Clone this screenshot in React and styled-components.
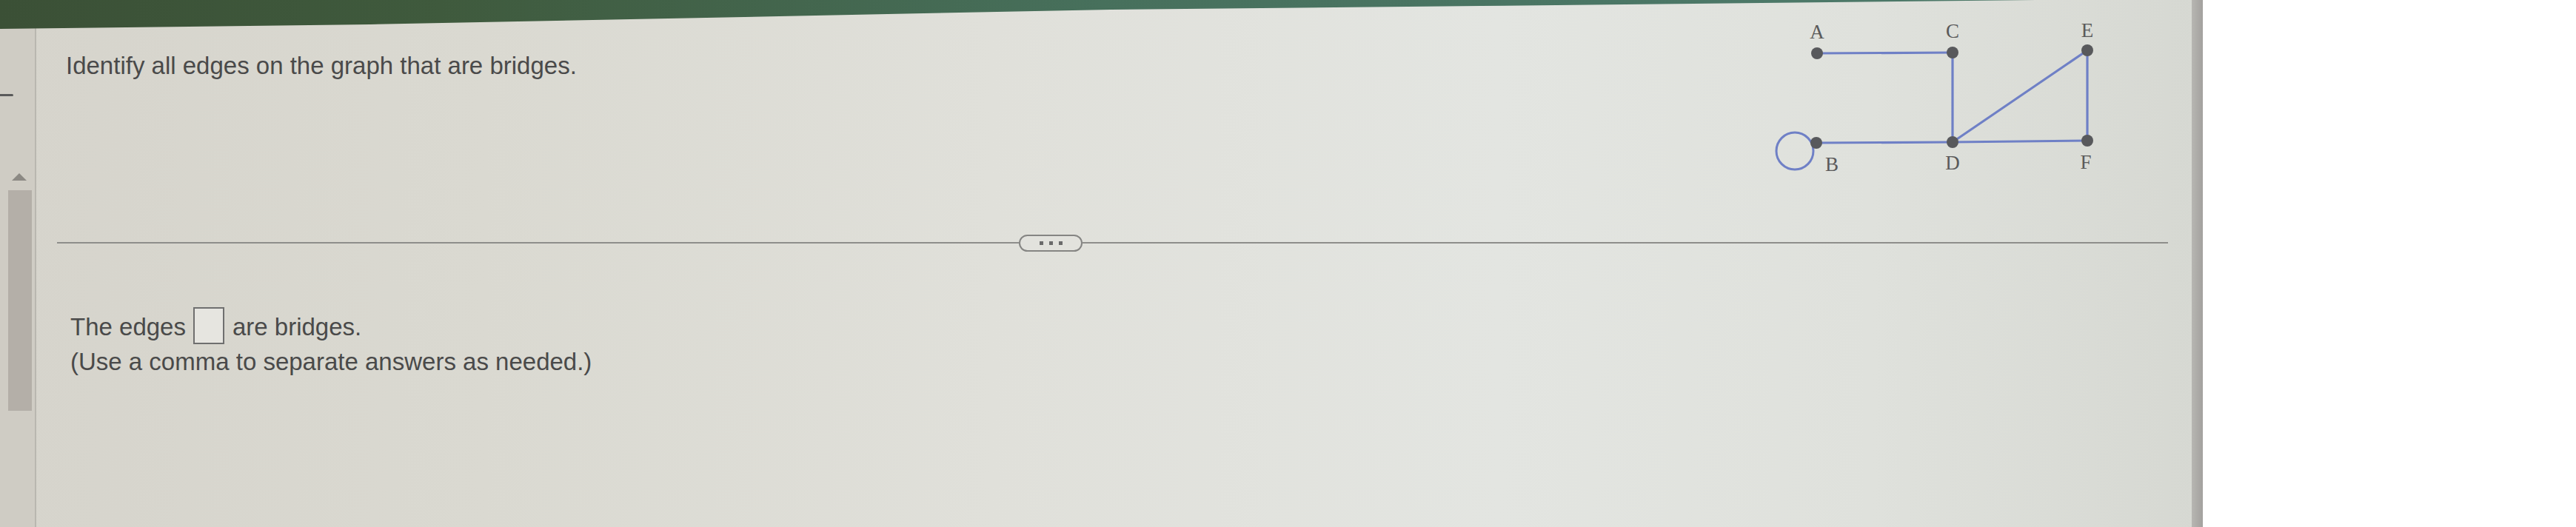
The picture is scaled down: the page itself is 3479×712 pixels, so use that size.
import React from "react";
import styled, { createGlobalStyle } from "styled-components";

const Global = createGlobalStyle`
  html, body { margin: 0; padding: 0; background: #ffffff; }
  body { font-family: "Liberation Sans", Arial, sans-serif; }
`;

const Screen = styled.div`
  width: 3479px;
  height: 712px;
  display: flex;
  background: #ffffff;
  overflow: hidden;
`;

const Panel = styled.div`
  position: relative;
  width: 2975px;
  height: 712px;
  display: flex;
  background: linear-gradient(90deg, #d6d4cc 0%, #dad9d1 22%, #e0e0da 45%, #e3e5e1 68%, #dfe1dc 85%, #d6d8d2 100%);
  &::before {
    content: "";
    position: absolute;
    left: 0;
    top: 0;
    width: 2975px;
    height: 42px;
    background: linear-gradient(90deg, #3b5036 0%, #3f5a3d 20%, #47705c 50%, #4c7868 80%);
    clip-path: polygon(0 0, 2750px 0, 2000px 8px, 1500px 13px, 500px 33px, 0 39px);
    z-index: 2;
  }
`;

const Sidebar = styled.div`
  position: relative;
  width: 47px;
  flex: none;
  background: #cfccc4;
  border-right: 2px solid #b9b7b0;
`;

const Tick = styled.div`
  position: absolute;
  left: 0;
  top: ${p => p.$top}px;
  width: ${p => p.$w}px;
  height: 3px;
  background: #5a5a5a;
  border-radius: 0 2px 2px 0;
`;

const ArrowUp = styled.div`
  position: absolute;
  left: 16px;
  top: 234px;
  width: 0;
  height: 0;
  border-left: 10px solid transparent;
  border-right: 10px solid transparent;
  border-bottom: 10px solid #8c8984;
`;

const Thumb = styled.div`
  position: absolute;
  left: 11px;
  top: 257px;
  width: 32px;
  height: 298px;
  background: #b4afa8;
`;

const EdgeStrip = styled.div`
  width: 15px;
  flex: none;
  background: linear-gradient(90deg, #b7b6b2, #a3a19e);
`;

const Content = styled.div`
  flex: 1;
  display: flex;
  flex-direction: column;
  color: #4a4a4a;
`;

const Header = styled.div`
  height: 316px;
  display: flex;
  justify-content: space-between;
  align-items: flex-start;
`;

const Question = styled.div`
  margin: 69px 0 0 40px;
  font-size: 33px;
  line-height: 1.2;
`;

const GraphSvg = styled.svg`
  display: block;
  margin-right: 96px;
`;

const DividerRow = styled.div`
  height: 24px;
  display: flex;
  align-items: center;
  margin: 0 32px 0 28px;
`;

const Rule = styled.div`
  height: 2px;
  background: #8e8e8b;
  flex: ${p => (p.$grow ? 1 : "none")};
  width: ${p => (p.$w ? `${p.$w}px` : "auto")};
`;

const Pill = styled.div`
  width: 82px;
  height: 19px;
  flex: none;
  border: 2px solid #858583;
  border-radius: 12px;
  display: flex;
  align-items: center;
  justify-content: center;
  gap: 8px;
  background: #e2e2dd;
`;

const Dot = styled.span`
  width: 5px;
  height: 5px;
  background: #6b6b6b;
`;

const Answer = styled.div`
  margin: 75px 0 0 46px;
  font-size: 33px;
`;

const Line = styled.div`
  line-height: 47px;
  white-space: nowrap;
`;

const Box = styled.span`
  display: inline-block;
  width: 38px;
  height: 46px;
  border: 2px solid #6f6f6f;
  background: #e6e5e0;
  margin: 0 11px 0 10px;
  vertical-align: -12px;
  box-sizing: content-box;
`;

const nodes = [
  { id: "A", x: 70, y: 72, lx: 70, ly: 52 },
  { id: "C", x: 253, y: 71, lx: 253, ly: 51 },
  { id: "E", x: 435, y: 68, lx: 435, ly: 50 },
  { id: "B", x: 69, y: 193, lx: 90, ly: 231 },
  { id: "D", x: 253, y: 192, lx: 253, ly: 229 },
  { id: "F", x: 435, y: 190, lx: 433, ly: 228 },
];

const edges = [
  ["A", "C"],
  ["C", "D"],
  ["D", "E"],
  ["E", "F"],
  ["B", "D"],
  ["D", "F"],
];

function Graph() {
  const byId = Object.fromEntries(nodes.map(n => [n.id, n]));
  return (
    <GraphSvg width="480" height="245" viewBox="0 0 480 245">
      <circle cx="40" cy="204" r="25" fill="none" stroke="#6f80c6" strokeWidth="3" />
      {edges.map(([a, b]) => (
        <line
          key={a + b}
          x1={byId[a].x}
          y1={byId[a].y}
          x2={byId[b].x}
          y2={byId[b].y}
          stroke="#6f80c6"
          strokeWidth="3.2"
        />
      ))}
      {nodes.map(n => (
        <g key={n.id}>
          <circle cx={n.x} cy={n.y} r="8" fill="#58595c" />
          <text
            x={n.lx}
            y={n.ly}
            textAnchor="middle"
            fontFamily="'Liberation Serif', 'Times New Roman', serif"
            fontSize="27"
            fill="#5a5a5a"
          >
            {n.id}
          </text>
        </g>
      ))}
    </GraphSvg>
  );
}

export default function App() {
  return (
    <>
      <Global />
      <Screen>
        <Panel>
          <Sidebar>
            <Tick $top={127} $w={18} />
            <ArrowUp />
            <Thumb />
          </Sidebar>
          <Content>
            <Header>
              <Question>Identify all edges on the graph that are bridges.</Question>
              <Graph />
            </Header>
            <DividerRow>
              <Rule $w={1299} />
              <Pill>
                <Dot />
                <Dot />
                <Dot />
              </Pill>
              <Rule $grow />
            </DividerRow>
            <Answer>
              <Line>
                The edges<Box />are bridges.
              </Line>
              <Line>(Use a comma to separate answers as needed.)</Line>
            </Answer>
          </Content>
          <EdgeStrip />
        </Panel>
      </Screen>
    </>
  );
}
